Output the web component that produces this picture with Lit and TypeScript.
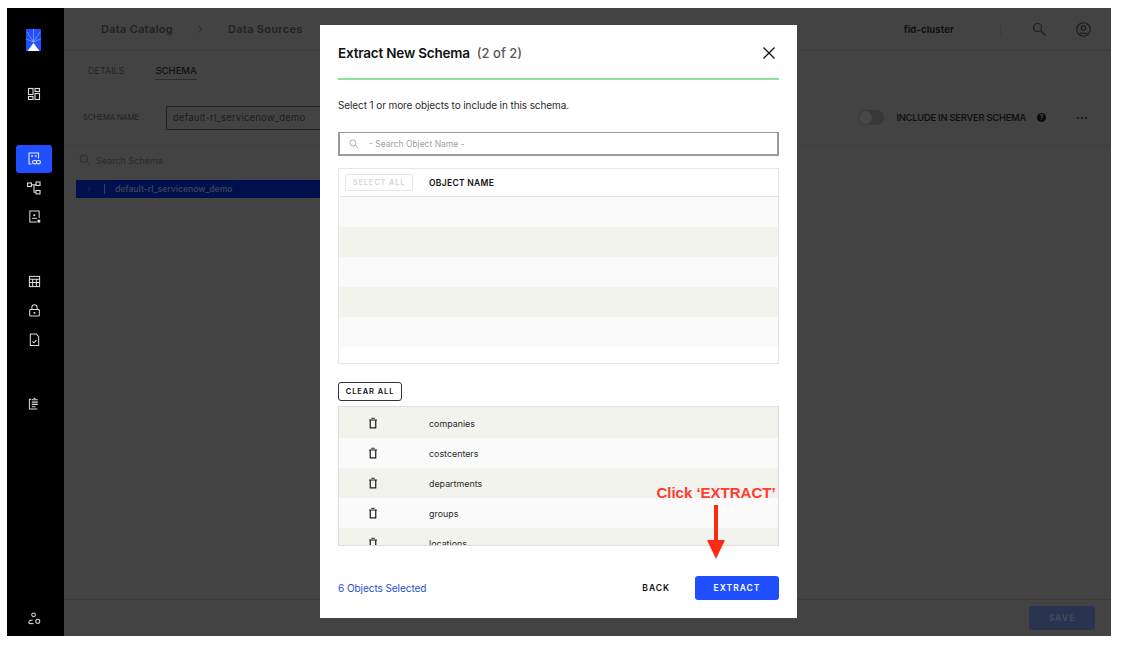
import { LitElement, css, html, svg } from 'lit';
import { customElement } from 'lit/decorators.js';

const icon = (body: unknown, size = 14) => html`
  <svg width=${size} height=${size} viewBox="0 0 14 14" fill="none" stroke="currentColor" stroke-width="1.1">${body}</svg>
`;

const navIcons = {
  dashboard: svg`<rect x="1.5" y="1.5" width="4.5" height="6"/><rect x="8" y="1.5" width="4.5" height="3"/><rect x="1.5" y="9.5" width="4.5" height="3"/><rect x="8" y="6.5" width="4.5" height="6"/>`,
  catalog: svg`<path d="M11.5 6.5V1h-9.5v11h2.5"/><rect x="4.3" y="3.2" width="1.6" height="1.6" fill="currentColor" stroke="none"/><rect x="7.8" y="3.2" width="1.6" height="1.6" fill="currentColor" stroke="none"/><rect x="5.6" y="8.5" width="4" height="3.4" rx="1.6"/><rect x="9.4" y="8.5" width="4" height="3.4" rx="1.6"/>`,
  tree: svg`<rect x="0.5" y="2" width="4" height="3.4"/><rect x="9" y="1" width="4" height="3.4"/><rect x="9" y="9.5" width="4" height="3.4"/><path d="M4.5 3.7h4.5M7 3.7v7.5h2"/>`,
  report: svg`<path d="M12 8.5V1H2v12h7.5"/><rect x="5.8" y="4.6" width="2" height="2" fill="currentColor" stroke="none"/><path d="M4.5 9h5"/><rect x="10.2" y="10.5" width="3" height="3" fill="currentColor" stroke="none"/>`,
  table: svg`<rect x="1.5" y="1.5" width="11" height="11"/><path d="M1.5 4.5h11M1.5 8h11M5 4.5v8M9 4.5v8"/>`,
  lock: svg`<rect x="1.8" y="6" width="10.4" height="7" rx="1"/><path d="M4.2 6V3.6a2.8 2.8 0 0 1 5.6 0V6"/><rect x="6.1" y="8.6" width="1.8" height="1.8" fill="currentColor" stroke="none"/>`,
  filecheck: svg`<path d="M2.5 1h6.5l2.5 3v9.5h-9z"/><path d="M4.8 9l1.6 1.6L9.2 7.5"/>`,
  clipboard: svg`<path d="M3.500 2.500H1.500V13H10"/><path d="M4 3h6.500M4 5.500h6.500M4 8h6.500M4 10.500h4" stroke-width="1.2"/><path d="M6 1.500h2"/>`,
  admin: svg`<circle cx="6" cy="3" r="2"/><path d="M1 12.500v-1.500c0-1.500 1.500-2.500 4-2.500"/><path d="M1 12.500h5"/><circle cx="10.500" cy="10" r="2.200"/>`,
};

const trash = icon(svg`<path d="M2.500 3.500h9" stroke-width="1.2"/><path d="M5 1.500h4"/><path d="M3.800 3.500v9.100h6.400V3.500" stroke-width="1.4"/>`, 12);

const objects = ['companies', 'costcenters', 'departments', 'groups', 'locations'];

@customElement('app-root')
export class AppRoot extends LitElement {
  static styles = css`
    :host {
      display: block;
      height: 645px;
      box-sizing: border-box;
      padding: 8px 10px 9px 7px;
      background: #fff;
      font-family: Inter, 'Liberation Sans', sans-serif;
      overflow: hidden;
    }
    .frame {
      position: relative;
      display: flex;
      height: 628px;
      background: #434343;
      color: #1b1b1b;
    }
    .side {
      width: 57px;
      flex: none;
      background: #000;
      display: flex;
      flex-direction: column;
      align-items: center;
      color: #dedede;
    }
    .logo {
      margin: 21px 4px 0 0;
      width: 15px;
      height: 22px;
      display: block;
    }
    .nav {
      width: 36px;
      height: 29px;
      display: flex;
      align-items: center;
      justify-content: center;
      border-radius: 3px;
      margin-right: 3px;
    }
    .nav.active { background: #1f4fff; height: 28px; color: #e8eeff; }
    .g1 { margin-top: 28px; }
    .g2 { margin-top: 37px; }
    .g3 { margin-top: 36px; }
    .g4 { margin-top: 35px; }
    .spacer { flex: 1; }
    .g5 { margin-bottom: 3px; }

    .main { flex: 1; display: flex; flex-direction: column; min-width: 0; }
    .top {
      height: 42px;
      flex: none;
      display: flex;
      align-items: center;
      padding: 0 20px 0 37px;
      border-bottom: 1px solid #3c3c3c;
      font-size: 11px;
      font-weight: 600;
      letter-spacing: 0.3px;
      color: #222;
    }
    .crumb-sep { margin: 0 23px 0 22px; display: flex; }
    .top .grow { flex: 1; }
    .cluster { font-size: 9.5px; font-weight: 700; letter-spacing: 0.1px; color: #111; margin-right: 46px; }
    .top-div { width: 1px; height: 14px; background: #3c3c3c; }
    .top-icon { display: flex; margin-left: 31px; color: #1c1c1c; }
    .top-icon + .top-icon { margin-left: 30px; }

    .tabs {
      height: 39px;
      flex: none;
      display: flex;
      align-items: flex-end;
      padding: 0 0 0 24px;
      gap: 31px;
      font-size: 9px;
      color: #232323;
    }
    .tab { padding-bottom: 3px; border-bottom: 1px solid transparent; line-height: 11px; margin-bottom: 10px; }
    .tab.on { color: #111; border-bottom-color: #2c2c2c; font-weight: 500; font-size: 9.5px; }

    .schema {
      height: 56px;
      flex: none;
      display: flex;
      align-items: center;
      padding: 0 24px 0 19px;
      border-bottom: 1px solid #3e3e3e;
      box-sizing: border-box;
      font-size: 7.5px;
      color: #262626;
    }
    .schema-label { width: 83px; font-weight: 500; letter-spacing: -0.1px; }
    .schema-input {
      width: 260px;
      height: 24px;
      box-sizing: border-box;
      border: 1px solid #222;
      padding-left: 6px;
      display: flex;
      align-items: center;
      font-size: 9.5px;
      letter-spacing: 0.2px;
      color: #1c1c1c;
    }
    .toggle {
      width: 26px;
      height: 15px;
      border-radius: 8px;
      background: #383838;
      margin-right: 12px;
      position: relative;
    }
    .toggle::after {
      content: '';
      position: absolute;
      left: 1px;
      top: 1px;
      width: 13px;
      height: 13px;
      border-radius: 50%;
      background: #484848;
    }
    .include { font-size: 9.3px; font-weight: 600; letter-spacing: -0.2px; color: #111; }
    .help {
      width: 9px;
      height: 9px;
      border-radius: 50%;
      background: #0c0c0c;
      color: #444;
      margin-left: 11px;
      font-size: 7px;
      font-weight: 700;
      display: flex;
      align-items: center;
      justify-content: center;
    }
    .dots { margin-left: 31px; display: flex; gap: 2px; }
    .dots i { width: 2px; height: 2px; border-radius: 50%; background: #111; }
    .schema .grow { flex: 1; }

    .tree-search {
      height: 28px;
      display: flex;
      align-items: center;
      gap: 5px;
      padding-left: 15px;
      font-size: 9px;
      color: #2a2a2a;
      flex: none;
    }
    .tree-row {
      margin: 6px 0 0 12px;
      width: 300px;
      height: 18px;
      background: #00104f;
      display: flex;
      align-items: center;
      padding-left: 9px;
      box-sizing: border-box;
      flex: none;
      font-size: 8.5px;
      font-weight: 600;
      color: #3c4258;
    }
    .tree-row .bar { width: 3px; height: 10px; border-right: 1px solid #3c4258; margin: 0 10px 0 8px; }
    .content { flex: 1; }
    .foot {
      height: 36px;
      flex: none;
      border-top: 1px solid #393939;
      display: flex;
      justify-content: flex-end;
      align-items: center;
      padding-right: 16px;
    }
    .save {
      width: 66px;
      height: 24px;
      border-radius: 3px;
      background: #2a3350;
      color: #454a5a;
      font-size: 8.5px;
      font-weight: 700;
      letter-spacing: 1px;
      display: flex;
      align-items: center;
      justify-content: center;
    }

    .modal {
      position: absolute;
      left: 313px;
      top: 17px;
      width: 477px;
      height: 593px;
      box-sizing: border-box;
      background: #fff;
      padding: 0 18px;
      display: flex;
      flex-direction: column;
      color: #111;
    }
    .m-head {
      height: 51px;
      padding-top: 2px;
      flex: none;
      border-bottom: 2px solid #8ee09b;
      display: flex;
      align-items: center;
      font-size: 13.5px;
      font-weight: 600;
      letter-spacing: -0.2px;
    }
    .m-head .step { color: #5a5a5a; font-weight: 500; margin-left: 7px; letter-spacing: 0; font-size: 13px; }
    .m-head .close { margin-left: auto; display: flex; color: #111; margin-right: 3px; }
    .lead { font-size: 10px; color: #2a2a2a; margin-top: 19px; line-height: 13px; height: 13px; letter-spacing: -0.1px; }
    .search {
      margin-top: 20px;
      height: 24px;
      box-sizing: border-box;
      border: 2px solid #9a9a9a;
      border-top-width: 1px;
      display: flex;
      align-items: center;
      padding-left: 9px;
      gap: 10px;
      font-size: 8.5px;
      color: #a0a0a0;
      flex: none;
    }
    .table {
      margin-top: 12px;
      height: 196px;
      box-sizing: border-box;
      border: 1px solid #e6e6e6;
      flex: none;
    }
    .t-head {
      height: 28px;
      box-sizing: border-box;
      border-bottom: 1px solid #e2e2e2;
      display: flex;
      align-items: center;
      padding-left: 6px;
      font-size: 8.5px;
      font-weight: 600;
      letter-spacing: 0.3px;
    }
    .select-all {
      width: 68px;
      height: 17px;
      box-sizing: border-box;
      border: 1px solid #e6e6e6;
      border-radius: 2px;
      color: #d6d6d6;
      font-size: 7.5px;
      letter-spacing: 0.8px;
      display: flex;
      align-items: center;
      justify-content: center;
      margin-right: 16px;
    }
    .row { height: 30px; flex: none; display: flex; align-items: center; font-size: 8.9px; color: #2a2a2a; }
    .row.a { background: #fafafa; }
    .row.b { background: #f3f3ee; }
    .clear {
      margin-top: 18px;
      width: 64px;
      height: 19px;
      box-sizing: border-box;
      border: 1px solid #333;
      border-radius: 3px;
      font-size: 7.5px;
      font-weight: 600;
      letter-spacing: 0.9px;
      display: flex;
      align-items: center;
      justify-content: center;
      flex: none;
    }
    .list {
      margin-top: 5px;
      height: 140px;
      box-sizing: border-box;
      border: 1px solid #dcdcdc;
      padding-top: 1px;
      background: #f3f3ee;
      overflow: hidden;
      flex: none;
    }
    .trash { width: 68px; display: flex; justify-content: center; color: #1a1a1a; }
    .name { margin-left: 22px; }
    .m-foot {
      margin-top: 30px;
      height: 24px;
      display: flex;
      align-items: center;
      flex: none;
    }
    .count { font-size: 10.1px; color: #1f4fd0; letter-spacing: -0.1px; }
    .back { margin-left: auto; font-size: 8.5px; font-weight: 600; letter-spacing: 1px; margin-right: 25px; }
    .extract {
      width: 84px;
      height: 24px;
      border-radius: 3px;
      background: #1f4fff;
      color: #fff;
      font-size: 8.5px;
      font-weight: 600;
      letter-spacing: 1px;
      display: flex;
      align-items: center;
      justify-content: center;
    }
    .callout {
      position: absolute;
      left: 648px;
      top: 477px;
      width: 122px;
      display: flex;
      flex-direction: column;
      align-items: center;
      color: #ff3b30;
      font-family: 'Liberation Sans', Arial, sans-serif;
      font-size: 15px;
      font-weight: 700;
      line-height: 16px;
      white-space: nowrap;
    }
    .callout svg { display: block; margin-top: 4px; }
  `;

  render () {
    return html`
      <div class="frame">
        <nav class="side">
          <svg class="logo" viewBox="0 0 15 22">
            <rect width="15" height="22" fill="#1f4fff"/>
            <path d="M7.500 13L1 3M7.500 13L14 3M7.500 13V0M7.500 13L0 10M7.500 13l7.500-3" stroke="#b9caff" stroke-width=".5" fill="none"/>
            <path d="M1.500 22h12L7.500 14z" fill="#fff"/>
          </svg>
          <div class="nav g1">${icon(navIcons.dashboard)}</div>
          <div class="nav active g2">${icon(navIcons.catalog)}</div>
          <div class="nav">${icon(navIcons.tree)}</div>
          <div class="nav">${icon(navIcons.report, 13)}</div>
          <div class="nav g3">${icon(navIcons.table, 13)}</div>
          <div class="nav">${icon(navIcons.lock, 13)}</div>
          <div class="nav">${icon(navIcons.filecheck, 13)}</div>
          <div class="nav g4">${icon(navIcons.clipboard, 13)}</div>
          <div class="spacer"></div>
          <div class="nav g5">${icon(navIcons.admin, 13)}</div>
        </nav>
        <div class="main">
          <header class="top">
            <span>Data Catalog</span>
            <span class="crumb-sep">${icon(svg`<path d="M4.500 2l5 5-5 5"/>`, 10)}</span>
            <span>Data Sources</span>
            <span class="grow"></span>
            <span class="cluster">fid-cluster</span>
            <span class="top-div"></span>
            <span class="top-icon">${icon(svg`<circle cx="5.500" cy="5.500" r="4"/><path d="M8.500 8.500L13.500 13.500"/>`)}</span>
            <span class="top-icon">${icon(svg`<circle cx="7" cy="7" r="6.300"/><circle cx="7" cy="5.500" r="2"/><path d="M3.500 10.500h7"/>`, 15)}</span>
          </header>
          <div class="tabs">
            <span class="tab">DETAILS</span>
            <span class="tab on">SCHEMA</span>
          </div>
          <div class="schema">
            <span class="schema-label">SCHEMA NAME</span>
            <span class="schema-input">default-rl_servicenow_demo</span>
            <span class="grow"></span>
            <span class="toggle"></span>
            <span class="include">INCLUDE IN SERVER SCHEMA</span>
            <span class="help">?</span>
            <span class="dots"><i></i><i></i><i></i></span>
          </div>
          <div class="tree-search">
            ${icon(svg`<circle cx="5.500" cy="5.500" r="4.300"/><path d="M8.700 8.700L13 13"/>`, 12)}
            <span>Search Schema</span>
          </div>
          <div class="tree-row">
            ${icon(svg`<path d="M5 3l4 4-4 4"/>`, 8)}
            <span class="bar"></span>
            <span>default-rl_servicenow_demo</span>
          </div>
          <div class="content"></div>
          <div class="foot"><span class="save">SAVE</span></div>
        </div>

        <section class="modal">
          <div class="m-head">
            <span>Extract New Schema</span>
            <span class="step">(2 of 2)</span>
            <span class="close">${icon(svg`<path d="M1.500 1.500l11 11M12.500 1.500l-11 11" stroke-width="1.300"/>`)}</span>
          </div>
          <div class="lead">Select 1 or more objects to include in this schema.</div>
          <div class="search">
            ${icon(svg`<circle cx="5.500" cy="5.500" r="4.300"/><path d="M8.700 8.700L13 13"/>`, 10)}
            <span>- Search Object Name -</span>
          </div>
          <div class="table">
            <div class="t-head">
              <span class="select-all">SELECT ALL</span>
              <span>OBJECT NAME</span>
            </div>
            ${['a', 'b', 'a', 'b', 'a'].map(c => html`<div class="row ${c}"></div>`)}
          </div>
          <div class="clear">CLEAR ALL</div>
          <div class="list">
            ${objects.map((name, i) => html`
              <div class="row ${i % 2 ? 'a' : 'b'}">
                <span class="trash">${trash}</span>
                <span class="name">${name}</span>
              </div>
            `)}
          </div>
          <div class="m-foot">
            <span class="count">6 Objects Selected</span>
            <span class="back">BACK</span>
            <span class="extract">EXTRACT</span>
          </div>
        </section>

        <div class="callout">
          <span>Click ‘EXTRACT’</span>
          <svg width="20" height="54" viewBox="0 0 20 54">
            <rect x="8" y="0" width="4" height="37" fill="#ff2a12"/>
            <path d="M1 35h18l-9 19z" fill="#ff2a12"/>
          </svg>
        </div>
      </div>
    `;
  }
}
